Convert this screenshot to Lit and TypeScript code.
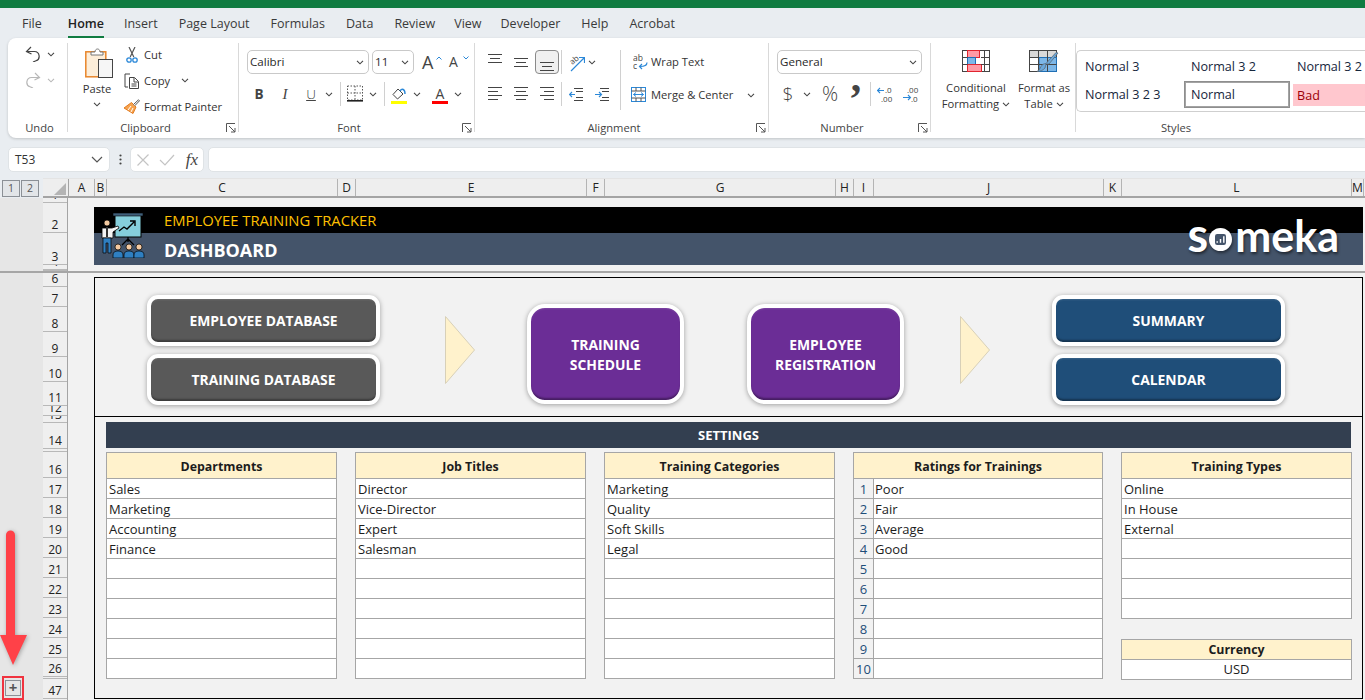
import { LitElement, html, css, svg } from "lit";
import { customElement } from "lit/decorators.js";

const chev = (c = "#444") => html`<svg class="chev" viewBox="0 0 8 5" width="8" height="5"><path d="M1 .8 4 3.8 7 .8" fill="none" stroke="${c}" stroke-width="1.1"/></svg>`;
const launcher = html`<svg class="launch" viewBox="0 0 10 10" width="10" height="10"><path d="M.5 9V.5H9M3 3l6 6M9 5v4H5" fill="none" stroke="#555" stroke-width="1"/></svg>`;
const lines = (ys: number[], w: number[], anchor: string) => html`<svg viewBox="0 0 14 24" width="14" height="24">${ys.map((y, i) => {
  const x = anchor === "l" ? 0 : anchor === "r" ? 14 - w[i] : (14 - w[i]) / 2;
  return svg`<rect x="${x}" y="${y}" width="${w[i]}" height="1" fill="#444"/>`;
})}</svg>`;

const colHeads: [string, number][] = [["A", 26], ["B", 12], ["C", 231], ["D", 18], ["E", 231], ["F", 18], ["G", 231], ["H", 18], ["I", 20], ["J", 230], ["K", 18], ["L", 230], ["M", 12]];
const frozenRows: [string, number][] = [["1", 5], ["2", 30], ["3", 32], ["4", 5], ["", 1]];
const lowerRows: [string, number][] = [["6", 14], ["7", 20], ["8", 25], ["9", 25], ["10", 25], ["11", 24], ["12", 10], ["13", 7], ["14", 26], ["", 3], ["16", 26],
  ["17", 20], ["18", 20], ["19", 20], ["20", 20], ["21", 20], ["22", 20], ["23", 20], ["24", 20], ["25", 20], ["26", 19], ["", 2], ["47", 20], ["", 10]];

const tables: { title: string; items: string[]; w: number; numbered?: boolean }[] = [
  { title: "Departments", items: ["Sales", "Marketing", "Accounting", "Finance"], w: 231 },
  { title: "Job Titles", items: ["Director", "Vice-Director", "Expert", "Salesman"], w: 231 },
  { title: "Training Categories", items: ["Marketing", "Quality", "Soft Skills", "Legal"], w: 231 },
  { title: "Ratings for Trainings", items: ["Poor", "Fair", "Average", "Good"], w: 250, numbered: true },
];
const types = ["Online", "In House", "External", "", "", "", ""];
const tabs = ["File", "Home", "Insert", "Page Layout", "Formulas", "Data", "Review", "View", "Developer", "Help", "Acrobat"];

@customElement("app-root")
export class AppRoot extends LitElement {
  static styles = css`
    :host { display: block; width: 1365px; height: 700px; overflow: hidden; background: #e9edf1; font-family: "Open Sans", "Noto Sans", sans-serif; color: #333; font-size: 11.2px; }
    svg { display: block; flex: none; }
    .green { height: 8px; background: #107c41; }
    .tabs { height: 30px; display: flex; align-items: center; gap: 21px; padding-left: 22px; font-size: 12.5px; color: #3a3a3a; box-sizing: border-box; padding-top: 1px; }
    .tab { position: relative; line-height: 20px; }
    .tab.on { font-weight: 600; color: #222; margin-left: 5px; margin-right: -1px; }
    .tab.on::after { content: ""; position: absolute; left: 0; right: 0; bottom: -4px; height: 2px; background: #107c41; }
    .tab.tight { margin-right: -2px; }
    .ribbon { height: 100px; margin-left: 8px; background: #fff; border-radius: 8px 0 0 8px; display: flex; padding-top: 5px; box-sizing: border-box; box-shadow: 0 1px 3px rgba(0,0,0,.18); }
    .group { height: 89px; border-right: 1px solid #d9d9d9; box-sizing: border-box; display: flex; flex-direction: column; position: relative; flex: none; }
    .gbody { height: 77px; display: flex; flex: none; }
    .glabel { height: 16px; line-height: 16px; text-align: center; flex: none; color: #444; }
    .pr { padding-right: 15px; }
    .launch { position: absolute; right: 2px; bottom: -1px; }
    .row { display: flex; align-items: center; }
    .g-undo { width: 60px; }
    .g-undo .glabel { padding-left: 4px; }
    .g-undo .gbody { flex-direction: column; padding: 3px 0 0 17px; gap: 10px; box-sizing: border-box; }
    .g-undo .chev { margin-left: 6px; margin-top: 1px; }
    .g-clip { width: 171px; }
    .paste { width: 40px; margin-left: 9px; display: flex; flex-direction: column; align-items: center; padding-top: 4px; box-sizing: border-box; }
    .paste .pi { margin-left: 4px; }
    .paste span { margin-top: 3px; line-height: 16px; }
    .paste .chev { margin-top: 5px; }
    .clipcol { margin-left: 7px; margin-top: -2px; }
    .clipcol .row { height: 26px; }
    .clipcol .ico { width: 16px; margin-right: 4px; display: flex; justify-content: center; margin-top: 1px; }
    .clipcol .chev { margin-left: 11px; }
    .g-font { width: 236px; }
    .stack { display: flex; flex-direction: column; padding-top: 7px; box-sizing: border-box; }
    .stack .row { height: 24px; }
    .stack .row + .row { margin-top: 8px; }
    .g-font .stack { padding-left: 8px; }
    .select { height: 24px; border: 1px solid #c9c9c9; border-radius: 5px; box-sizing: border-box; display: flex; align-items: center; justify-content: space-between; padding: 0 4px 2px 2px; color: #2a2a2a; font-size: 11.6px; }
    .select .chev { margin-top: 2px; }
    .sz-font { width: 122px; }
    .sz-size { width: 42px; margin-left: 3px; }
    .sz-num { width: 145px; }
    .bigA { font-size: 18px; display: flex; width: 17px; margin-left: 8px; position: relative; color: #444; line-height: 24px; }
    .bigA.small { font-size: 14px; margin-left: 10px; }
    .caret { position: absolute; right: -3px; top: 6px; }
    .fmt { width: 16px; text-align: center; font-size: 13.5px; color: #444; line-height: 20px; }
    .fmt.b { font-weight: 700; margin-left: 4px; }
    .fmt.i { font-style: italic; margin-left: 10px; font-family: "Liberation Serif", serif; font-size: 15px; }
    .fmt.u { text-decoration: underline; margin-left: 10px; font-weight: 300; }
    .ml6 { margin-left: 6px; } .ml7 { margin-left: 7px; } .ml11 { margin-left: 11px; } .ml12 { margin-left: 12px; } .ml3 { margin-left: 3px; } .ml2 { margin-left: 2px; } .ml10 { margin-left: 10px; } .ml14 { margin-left: 14px; }
    .vsep { width: 1px; height: 24px; background: #d0d0d0; flex: none; }
    .colorbtn { width: 16px; height: 24px; display: flex; flex-direction: column; align-items: center; justify-content: flex-end; padding-bottom: 2px; box-sizing: border-box; }
    .colorbtn .a { font-size: 14px; line-height: 15px; color: #444; }
    .bar { width: 16px; height: 3px; flex: none; }
    .bar.y { background: #ffff00; }
    .bar.r { background: #ff0000; }
    .g-align { width: 294px; }
    .g-align .gbody { display: flex; }
    .a-left { width: 145px; padding-left: 13px; }
    .a-right { border-left: 1px solid #d0d0d0; height: 60px; padding: 0 0 0 12px; margin-top: 7px; box-sizing: border-box; }
    .a-right.stack { padding-top: 0; }
    .a-right .row { padding-bottom: 1px; box-sizing: border-box; }
    .a-right .row + .row { margin-top: 9px; }
    .a-right .ico { width: 15px; margin-right: 3px; }
    .a-right .ico.merge { margin-left: -2px; margin-right: 5px; }
    .a-right .chev { margin-top: 1px; }
    .selbox { width: 24px; height: 24px; background: #f0f0f0; border: 1px solid #8a8a8a; border-radius: 4px; box-sizing: border-box; display: flex; justify-content: center; margin-left: 7px; }
    .selbox svg { margin-top: -1px; }
    .g-num { width: 162px; }
    .g-num .stack { padding-left: 8px; }
    .numsym { text-align: center; color: #444; line-height: 24px; }
    .dollar { width: 16px; font-size: 19px; font-weight: 300; margin-left: 3px; }
    .pct { width: 20px; margin-left: 9px; font-size: 20px; font-weight: 300; }
    .comma { width: 16px; margin-left: 8px; font-family: "Liberation Serif", serif; font-size: 42px; font-weight: 700; transform: translateY(-17px); }
    .ch7 { margin-left: 7px; }
    .g-ins { width: 145px; }
    .g-ins .gbody { padding-left: 9px; padding-top: 7px; box-sizing: border-box; }
    .bigbtn { display: flex; flex-direction: column; align-items: center; text-align: center; line-height: 16px; }
    .bigbtn svg.big { margin-bottom: 8px; }
    .bb1 { width: 72px; } .bb2 { width: 56px; margin-left: 4px; }
    .inl { display: inline-flex; align-items: center; gap: 3px; }
    .g-sty { width: 200px; border-right: none; }
    .g-sty .gbody { padding-top: 7px; box-sizing: border-box; }
    .gallery { flex: none; width: 330px; height: 62px; border: 1px solid #cfcfcf; border-right: none; border-radius: 5px 0 0 5px; box-sizing: border-box; display: grid; grid-template-columns: 106px 106px 106px; grid-template-rows: 29px 27px; padding: 1px 0 0 1px; font-size: 12.6px; color: #16263c; }
    .gc { display: flex; align-items: center; padding-left: 7px; box-sizing: border-box; white-space: nowrap; }
    .gc.sel { border: 2px solid #a3a3a3; padding-left: 5px; outline: 1px solid #8e8e8e; outline-offset: -1px; }
    .gc.bad { background: #ffc7ce; color: #9c0006; margin: 3px 0 2px 3px; padding-left: 4px; }
    .fbar { height: 40px; padding: 9px 0 0 8px; box-sizing: border-box; display: flex; }
    .fbox { height: 25px; background: #fff; border: 1px solid #dfe3e6; border-radius: 5px; box-sizing: border-box; display: flex; align-items: center; flex: none; }
    .name { width: 102px; padding: 0 6px; justify-content: space-between; font-size: 12px; color: #333; }
    .dots { width: 20px; display: flex; justify-content: center; align-items: center; height: 25px; flex: none; }
    .fx { width: 74px; padding: 0 5px 0 6px; justify-content: space-between; }
    .fxt { font-family: "Liberation Serif", serif; font-style: italic; font-size: 17px; color: #444; }
    .finput { width: 1170px; margin-left: 4px; }
    .colrow { height: 20px; display: flex; background: #eeeeee; box-sizing: border-box; border-bottom: 2px solid #a4a4a4; border-top: 1px solid #e4e4e4; }
    .outline { width: 43px; background: #e9edf1; display: flex; gap: 1px; padding: 2px 0 0 2px; box-sizing: border-box; flex: none; margin-top: -1px; margin-bottom: -2px; }
    .ob { width: 18px; height: 17px; border: 1px solid #8b9096; background: #e2e5e8; box-sizing: border-box; text-align: center; font-size: 10.5px; line-height: 15px; color: #555; }
    .corner { width: 26px; border-right: 1px solid #a4a4a4; box-sizing: border-box; display: flex; justify-content: flex-end; align-items: flex-end; padding: 0 2px 1px 0; flex: none; }
    .ch { flex: none; box-sizing: border-box; border-right: 1px solid #b4b4b4; text-align: center; font-size: 12px; line-height: 17px; color: #222; overflow: hidden; }
    .pane { display: flex; position: relative; background: #f2f2f2; }
    .frozen { height: 73px; }
    .lower { height: 427px; }
    .fline { height: 2px; background: #a6a6a6; }
    .gutter { width: 43px; background: #e6e6e6; flex: none; display: flex; flex-direction: column; position: relative; }
    .rhs { width: 25px; flex: none; border-right: 1px solid #a4a4a4; box-sizing: border-box; background: #efefef; overflow: hidden; }
    .rh { display: flex; justify-content: center; align-items: flex-end; overflow: hidden; border-bottom: 1px solid #b8b8b8; box-sizing: border-box; font-size: 12px; color: #222; }
    .rh span { line-height: 15px; flex: none; }
    .content { margin-left: 26px; width: 1269px; flex: none; }
    .banner { margin-top: 9px; position: relative; }
    .bline1 { height: 26px; background: #000; color: #ffc000; font-size: 14.8px; line-height: 26px; padding-left: 70px; }
    .bline2 { height: 32px; background: #44546a; color: #fff; font-size: 18px; font-weight: 700; line-height: 34px; padding-left: 70px; }
    .bicon { position: absolute; left: 6px; top: 1px; }
    .logo { position: absolute; right: 24px; top: 1px; display: flex; align-items: baseline; font-family: Lato, sans-serif; font-weight: 700; font-size: 43px; line-height: 52px; color: #fff; text-shadow: 1px 2px 3px rgba(0,0,0,.55); }
    .logo .s { font-size: 47px; }
    .logo .disc { width: 23px; height: 23px; border-radius: 50%; background: #fff; margin: 0 3px 0 1px; box-shadow: 1px 2px 3px rgba(0,0,0,.45); flex: none; align-self: flex-end; margin-bottom: 11px; display: flex; align-items: center; justify-content: center; }
    .box { margin-top: 4px; border: 1px solid #000; box-sizing: border-box; height: 422px; }
    .panel { height: 139px; border-bottom: 1px solid #000; box-sizing: border-box; display: flex; align-items: flex-start; padding: 17px 0 0 52px; }
    .navcol { display: flex; flex-direction: column; gap: 8px; flex: none; }
    .btn { box-sizing: border-box; border: 4px solid #fff; color: #fff; font-weight: 700; font-size: 13.9px; line-height: 20px; text-align: center; display: flex; align-items: center; justify-content: center; box-shadow: 0 1px 5px rgba(0,0,0,.35), inset 0 -3px 2px -1px rgba(0,0,0,.35), inset 0 2px 2px -1px rgba(255,255,255,.12); flex: none; }
    .wide { width: 233px; height: 51px; border-radius: 11px; }
    .tall { width: 157px; height: 100px; border-radius: 18px; margin-top: 9px; background: #6b2d96; padding-top: 2px; }
    .grey { background: #595959; }
    .blue { background: #1f4e79; }
    .arrow { margin-top: 21px; }
    .m1 { margin-left: 65px; } .m2 { margin-left: 52px; } .m3 { margin-left: 63px; } .m4 { margin-left: 56px; } .m5 { margin-left: 62px; }
    .settings { padding: 5px 0 0 11px; }
    .sbar { width: 1245px; height: 26px; background: #333f50; color: #fff; font-weight: 700; font-size: 13px; line-height: 26px; text-align: center; }
    .tables { display: flex; gap: 18px; margin-top: 4px; font-size: 13px; color: #1c1c1c; }
    .tcol { display: flex; flex-direction: column; flex: none; width: 231px; }
    .tbl { border: 1px solid #a6a6a6; border-bottom: none; box-sizing: border-box; background: #fff; }
    .th { height: 26px; background: #fff2cc; font-weight: 700; font-size: 12.4px; text-align: center; line-height: 27px; border-bottom: 1px solid #a6a6a6; box-sizing: border-box; }
    .th.sm { height: 20px; line-height: 19px; }
    .td { height: 20px; line-height: 20px; padding-left: 2px; border-bottom: 1px solid #a6a6a6; box-sizing: border-box; display: flex; }
    .td.ctr { justify-content: center; padding: 0; line-height: 18px; }
    .td.num { padding-left: 0; }
    .idx { width: 19px; background: #f2f2f2; border-right: 1px solid #a6a6a6; text-align: center; color: #1f4e79; box-sizing: content-box; flex: none; margin-right: 1px; }
    .cur { margin-top: 20px; }
    .plus { margin-top: auto; margin-left: 2px; width: 22px; height: 24px; border: 2px solid #f0333f; box-sizing: border-box; display: flex; align-items: center; justify-content: center; }
    .plus b { width: 16px; height: 16px; border: 1px solid #8b9096; box-sizing: border-box; display: block; font-weight: 700; font-size: 15px; line-height: 13px; text-align: center; color: #555; background: #e6e6e6; }
    .redarrow { position: absolute; left: 0; top: 257px; filter: drop-shadow(1px 1px 2px rgba(0,0,0,.3)); }
    .svt { font-family: "Open Sans", sans-serif; fill: #444; }
  `;

  private undoIcon(c: string, flip = false) {
    return html`<svg viewBox="0 0 16 16" width="16" height="16"><path d="${flip ? "M10 1 14.500 5.500 9.500 8M14 5.500H6.500A4.800 4.800 0 0 0 5 14.800L8 16" : "M6 1 1.500 5.500 6.500 8M2 5.500h7.500a4.800 4.800 0 0 1 1.500 9.300L8 16"}" fill="none" stroke="${c}" stroke-width="1.200"/></svg>`;
  }

  private ribbon() {
    return html`<div class="ribbon">
      <div class="group g-undo"><div class="gbody">
        <div class="row">${this.undoIcon("#444")}${chev()}</div>
        <div class="row">${this.undoIcon("#b8b8b8", true)}${chev("#b8b8b8")}</div>
      </div><div class="glabel">Undo</div></div>

      <div class="group g-clip"><div class="gbody">
        <div class="paste">
          <svg class="pi" viewBox="0 0 28 31" width="28" height="31"><rect x=".8" y="4.800" width="20" height="25" fill="#fdeed9" stroke="#e8862a" stroke-width="1.500"/><path d="M6 8V5h4c0-4 5-4 5 0h3v3z" fill="#fff" stroke="#777"/><rect x="13.500" y="12.500" width="14" height="18" fill="#f6f6f6" stroke="#444"/></svg>
          <span>Paste</span>${chev()}
        </div>
        <div class="clipcol">
          <div class="row"><div class="ico"><svg viewBox="0 0 12 16" width="12" height="16"><path d="M3 0 7.800 10M9 0 4.200 10" fill="none" stroke="#555" stroke-width="1.200"/><circle cx="3" cy="13" r="2.200" fill="none" stroke="#2b88d8" stroke-width="1.300"/><circle cx="9" cy="13" r="2.200" fill="none" stroke="#2b88d8" stroke-width="1.300"/></svg></div>Cut</div>
          <div class="row"><div class="ico"><svg viewBox="0 0 16 16" width="16" height="16"><path d="M6 1H1v13h3M5.500 4.500h5l4 4v7h-9zM10 5v4h4M7.500 11h5M7.500 13h5" fill="none" stroke="#444"/></svg></div>Copy${chev()}</div>
          <div class="row"><div class="ico"><svg viewBox="0 0 16 15" width="16" height="15"><path d="M7.500 3.500 12 8l-3 6.500L0 9z" fill="#f7a34f" stroke="#e07b20"/><path d="M9.500 5.500 14.500.8l1 1-4.800 5" fill="#fff" stroke="#555"/><path d="M4 11l3-4M7 13l2-4" stroke="#fff"/></svg></div>Format Painter</div>
        </div>
      </div><div class="glabel pr">Clipboard</div>${launcher}</div>

      <div class="group g-font"><div class="gbody"><div class="stack">
        <div class="row">
          <div class="select sz-font">Calibri${chev()}</div>
          <div class="select sz-size">11${chev()}</div>
          <div class="bigA">A<svg class="caret" viewBox="0 0 6 4" width="6" height="4"><path d="M.5 3.500 3 1l2.500 2.500" fill="none" stroke="#2b88d8"/></svg></div>
          <div class="bigA small">A<svg class="caret" viewBox="0 0 6 4" width="6" height="4"><path d="M.5.500 3 3 5.500.500" fill="none" stroke="#2b88d8"/></svg></div>
        </div>
        <div class="row">
          <div class="fmt b">B</div><div class="fmt i">I</div><div class="fmt u">U</div><span class="ml6">${chev()}</span>
          <div class="vsep ml7"></div>
          <svg class="ml6" viewBox="0 0 16 18" width="16" height="18"><path d="M.5 1h15v14H.5zM8 1v14M.5 8h15" fill="none" stroke="#555" stroke-dasharray="1.500 1.500"/><rect y="15" width="16" height="1.600" fill="#222"/></svg>
          <span class="ml6">${chev()}</span>
          <div class="vsep ml7"></div>
          <div class="colorbtn ml6"><svg viewBox="0 0 16 14" width="16" height="14"><path d="M7 2 2 7.500 6.500 12 12 7z" fill="#fff" stroke="#444"/><path d="M9 4c2-3 5-2 5 3" fill="none" stroke="#2b88d8" stroke-width="1.400"/></svg><div class="bar y"></div></div>
          <span class="ml6">${chev()}</span>
          <div class="colorbtn ml11"><span class="a">A</span><div class="bar r"></div></div>
          <span class="ml6">${chev()}</span>
        </div>
      </div></div><div class="glabel pr">Font</div>${launcher}</div>

      <div class="group g-align"><div class="gbody">
        <div class="stack a-left">
          <div class="row">
            ${lines([4, 8, 12], [14, 10, 14], "c")}
            <span class="ml12">${lines([8, 12, 16], [14, 10, 14], "c")}</span>
            <div class="selbox">${lines([12, 16, 20], [14, 10, 14], "c")}</div>
            <div class="vsep ml2"></div>
            <svg class="ml6" viewBox="0 0 17 20" width="17" height="20"><text class="svt" x="2" y="11" font-size="8" transform="rotate(-40 6 9)">ab</text><path d="M3 19 16 6M11 5.500h5.500V11" fill="none" stroke="#2b88d8" stroke-width="1.200"/></svg>
            <span class="ml3">${chev()}</span>
          </div>
          <div class="row">
            ${lines([5, 9, 13, 17], [14, 10, 14, 10], "l")}
            <span class="ml12">${lines([5, 9, 13, 17], [14, 10, 14, 10], "c")}</span>
            <span class="ml12">${lines([5, 9, 13, 17], [14, 10, 14, 10], "r")}</span>
            <div class="vsep ml7"></div>
            <svg class="ml7" viewBox="0 0 14 14" width="14" height="14"><path d="M5 1.500h9M7 4.500h7M7 10.500h7M5 13.500h9" fill="none" stroke="#444"/><path d="M6 7.500H.5M3 5 .5 7.500 3 10" fill="none" stroke="#2b88d8" stroke-width="1.200"/></svg>
            <svg class="ml12" viewBox="0 0 14 14" width="14" height="14"><path d="M5 1.500h9M7 4.500h7M7 10.500h7M5 13.500h9" fill="none" stroke="#444"/><path d="M0 7.500h6M4 5l2.500 2.500L4 10" fill="none" stroke="#2b88d8" stroke-width="1.200"/></svg>
          </div>
        </div>
        <div class="stack a-right">
          <div class="row"><div class="ico"><svg viewBox="0 0 15 19" width="15" height="19"><text class="svt" x="0" y="8.500" font-size="8.500">ab</text><text class="svt" x="0" y="17" font-size="8.500">c</text><path d="M14 10.500c0 3-2 4-7 4M9 12l-2.500 2.500L9 17" fill="none" stroke="#2b88d8" stroke-width="1.200"/></svg></div>Wrap Text</div>
          <div class="row"><div class="ico merge"><svg viewBox="0 0 15 15" width="15" height="15"><rect x=".5" y=".5" width="14" height="14" fill="#fff" stroke="#2b88d8"/><path d="M.5 4h14M.5 11h14M5 .5V4M10 .5V4M5 11v3.500M10 11v3.500" stroke="#555" fill="none"/><path d="M2.500 7.500h10M5 5.500l-2.500 2 2.500 2M10 5.500l2.500 2-2.500 2" fill="none" stroke="#2b88d8"/></svg></div>Merge &amp; Center<span class="ml14">${chev()}</span></div>
        </div>
      </div><div class="glabel pr">Alignment</div>${launcher}</div>

      <div class="group g-num"><div class="gbody"><div class="stack">
        <div class="row"><div class="select sz-num">General${chev()}</div></div>
        <div class="row">
          <div class="numsym dollar">$</div>
          <span class="ch7">${chev()}</span>
          <div class="numsym pct">%</div>
          <div class="numsym comma">,</div>
          <div class="vsep ml6"></div>
          <svg class="ml6" viewBox="0 0 16 18" width="16" height="18"><text class="svt" x="8" y="8" font-size="8">.0</text><text class="svt" x="4" y="17" font-size="8">.00</text><path d="M0 5.500h7M3 3 .5 5.500 3 8" fill="none" stroke="#2b88d8" stroke-width="1.100"/></svg>
          <svg class="ml10" viewBox="0 0 16 18" width="16" height="18"><text class="svt" x="4" y="8" font-size="8">.00</text><text class="svt" x="8" y="17" font-size="8">.0</text><path d="M0 12.500h7M5 10l2.500 2.500L5 15" fill="none" stroke="#2b88d8" stroke-width="1.100"/></svg>
        </div>
      </div></div><div class="glabel pr">Number</div>${launcher}</div>

      <div class="group g-ins"><div class="gbody">
        <div class="bigbtn bb1">
          <svg class="big" viewBox="0 0 28 22" width="28" height="22"><rect x=".5" y=".5" width="27" height="21" fill="#fff" stroke="#444"/><rect x="5.500" y=".5" width="12" height="7" fill="#ff9aa5" stroke="#e0252f"/><rect x="5.500" y="7.500" width="8" height="7" fill="#7db7e8" stroke="#1f6fb5"/><rect x="5.500" y="14.500" width="14" height="7" fill="#ff9aa5" stroke="#e0252f"/><path d="M.5 7.500h5M.5 14.500h5M19 7.500h8.500M19 14.500h8.500M22.500 .5v21" stroke="#444" fill="none"/></svg>
          <div>Conditional</div><div class="inl">Formatting ${chev()}</div>
        </div>
        <div class="bigbtn bb2">
          <svg class="big" viewBox="0 0 30 22" width="30" height="22"><rect x=".5" y=".5" width="27" height="21" fill="#fff" stroke="#444"/><rect x=".5" y=".5" width="27" height="7" fill="#d9d9d9" stroke="#444"/><rect x="10" y="7.500" width="17.500" height="14" fill="#7db7e8" stroke="#1f6fb5"/><path d="M9.500 .5v21M18.500 .5v21M.5 14.500h27" stroke="#444" fill="none"/><path d="M29 3 20 14l-3 0-1 4c-2 2-4 3.500-8 3.500 2-1 3-3 4-5 1-2 3-3 5-3l10-11z" fill="#6aa8dc" stroke="#5b6b7a" stroke-width=".8"/></svg>
          <div>Format as</div><div class="inl">Table ${chev()}</div>
        </div>
      </div></div>

      <div class="group g-sty"><div class="gbody">
        <div class="gallery">
          <div class="gc">Normal 3</div><div class="gc">Normal 3 2</div><div class="gc">Normal 3 2</div>
          <div class="gc">Normal 3 2 3</div><div class="gc sel">Normal</div><div class="gc bad">Bad</div>
        </div>
      </div><div class="glabel">Styles</div></div>
    </div>`;
  }

  private rowHeads(list: [string, number][]) {
    return html`<div class="rhs">${list.map(([l, h]) => html`<div class="rh" style="height:${h}px"><span>${l}</span></div>`)}</div>`;
  }

  private table(t: { title: string; items: string[]; w: number; numbered?: boolean }) {
    return html`<div class="tcol" style="width:${t.w}px"><div class="tbl">
      <div class="th">${t.title}</div>
      ${Array.from({ length: 10 }, (_, i) => t.numbered
        ? html`<div class="td num"><span class="idx">${i + 1}</span>${t.items[i] ?? ""}</div>`
        : html`<div class="td">${t.items[i] ?? ""}</div>`)}
    </div></div>`;
  }

  render() {
    return html`
      <div class="green"></div>
      <div class="tabs">${tabs.map(t => html`<div class="tab ${t === "Home" ? "on" : ""} ${t === "Review" || t === "View" ? "tight" : ""}">${t}</div>`)}</div>
      ${this.ribbon()}
      <div class="fbar">
        <div class="fbox name">T53<svg viewBox="0 0 12 7" width="12" height="7"><path d="M1 1l5 5 5-5" fill="none" stroke="#555" stroke-width="1.200"/></svg></div>
        <div class="dots"><svg viewBox="0 0 3 11" width="3" height="11"><circle cx="1.500" cy="1.500" r="1.100" fill="#444"/><circle cx="1.500" cy="5.500" r="1.100" fill="#444"/><circle cx="1.500" cy="9.500" r="1.100" fill="#444"/></svg></div>
        <div class="fbox fx">
          <svg viewBox="0 0 12 12" width="12" height="12"><path d="M.5.500l11 11M11.500.5l-11 11" stroke="#c4c4c4" stroke-width="1.200"/></svg>
          <svg viewBox="0 0 16 12" width="16" height="12"><path d="M1 6l5 5L15 1" fill="none" stroke="#c4c4c4" stroke-width="1.200"/></svg>
          <span class="fxt">fx</span>
        </div>
        <div class="fbox finput"></div>
      </div>
      <div class="colrow">
        <div class="outline"><div class="ob">1</div><div class="ob">2</div></div>
        <div class="corner"><svg viewBox="0 0 12 12" width="12" height="12"><path d="M12 0v12H0z" fill="#b4b4b4"/></svg></div>
        ${colHeads.map(([l, w]) => html`<div class="ch" style="width:${w}px">${l}</div>`)}
      </div>
      <div class="pane frozen">
        <div class="gutter"></div>
        ${this.rowHeads(frozenRows)}
        <div class="content">
          <div class="banner">
            <div class="bline1">EMPLOYEE TRAINING TRACKER</div>
            <div class="bline2">DASHBOARD</div>
            <svg class="bicon" viewBox="0 0 46 50" width="46" height="50">
              <rect x="15" y="7" width="26" height="22" fill="#86cfdc" stroke="#000"/><rect x="13" y="5" width="30" height="3" fill="#3f5f7a" stroke="#000" stroke-width=".6"/>
              <path d="M28 29v5M28 31l-6 6M28 31l6 6" stroke="#000" fill="none" stroke-width="1.300"/>
              <path d="M19 23l5-4 3 2 7-7M30 13h5v5" fill="none" stroke="#000" stroke-width="1.400"/>
              <circle cx="7" cy="15" r="3" fill="#f3c9a0" stroke="#000" stroke-width=".7"/>
              <path d="M2 20h10l6-2 1 2-6 4v6H2z" fill="#f4f4f4" stroke="#000" stroke-width=".8"/><path d="M7 19v10" stroke="#333" stroke-width="2"/>
              <path d="M3 30h8v15H8v-10H6v10H3z" fill="#2f7fc1" stroke="#000" stroke-width=".7"/>
              ${[18, 29, 39].map(x => svg`<circle cx="${x}" cy="39" r="3" fill="#f3c9a0" stroke="#000" stroke-width=".7"/><path d="M${x - 5} 50v-3c0-3 2-4 5-4s5 1 5 4v3z" fill="#2f7fc1" stroke="#000" stroke-width=".7"/>`)}
            </svg>
            <div class="logo"><span class="s">s</span><span class="disc"><svg viewBox="0 0 10 10" width="11" height="11"><rect width="10" height="10" rx="2" fill="#44546a"/><path d="M2 8V6.500M5 8V4.500M8 8V2" stroke="#fff" stroke-width="1.300"/></svg></span><span>meka</span></div>
          </div>
        </div>
      </div>
      <div class="fline"></div>
      <div class="pane lower">
        <div class="gutter">
          <svg class="redarrow" viewBox="0 0 28 137" width="28" height="137"><path d="M6 5a4.500 4.500 0 0 1 9 0v100h12l-14 30L0 105h6z" fill="#ff4148"/></svg>
          <div class="plus"><b>+</b></div>
        </div>
        ${this.rowHeads(lowerRows)}
        <div class="content">
          <div class="box">
            <div class="panel">
              <div class="navcol"><div class="btn wide grey">EMPLOYEE DATABASE</div><div class="btn wide grey">TRAINING DATABASE</div></div>
              <svg class="arrow m1" viewBox="0 0 30 68" width="30" height="68"><path d="M.5.500 29.500 34 .5 67.500z" fill="#fff2cc" stroke="#d8d0b8"/></svg>
              <div class="btn tall m2">TRAINING<br>SCHEDULE</div>
              <div class="btn tall m3">EMPLOYEE<br>REGISTRATION</div>
              <svg class="arrow m4" viewBox="0 0 30 68" width="30" height="68"><path d="M.5.500 29.500 34 .5 67.500z" fill="#fff2cc" stroke="#d8d0b8"/></svg>
              <div class="navcol m5"><div class="btn wide blue">SUMMARY</div><div class="btn wide blue">CALENDAR</div></div>
            </div>
            <div class="settings">
              <div class="sbar">SETTINGS</div>
              <div class="tables">
                ${tables.map(t => this.table(t))}
                <div class="tcol">
                  <div class="tbl"><div class="th">Training Types</div>${types.map(t => html`<div class="td">${t}</div>`)}</div>
                  <div class="tbl cur"><div class="th sm">Currency</div><div class="td ctr">USD</div></div>
                </div>
              </div>
            </div>
          </div>
        </div>
      </div>
    `;
  }
}
